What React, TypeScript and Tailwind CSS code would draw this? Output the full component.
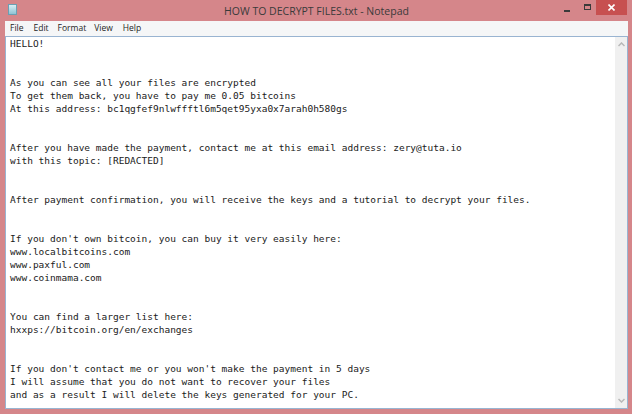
import React from "react";

const lines: string[] = [
  "HELLO!",
  "",
  "",
  "As you can see all your files are encrypted",
  "To get them back, you have to pay me 0.05 bitcoins",
  "At this address: bc1qgfef9nlwffftl6m5qet95yxa0x7arah0h580gs",
  "",
  "",
  "After you have made the payment, contact me at this email address: zery@tuta.io",
  "with this topic: [REDACTED]",
  "",
  "",
  "After payment confirmation, you will receive the keys and a tutorial to decrypt your files.",
  "",
  "",
  "If you don't own bitcoin, you can buy it very easily here:",
  "www.localbitcoins.com",
  "www.paxful.com",
  "www.coinmama.com",
  "",
  "",
  "You can find a larger list here:",
  "hxxps://bitcoin.org/en/exchanges",
  "",
  "",
  "If you don't contact me or you won't make the payment in 5 days",
  "I will assume that you do not want to recover your files",
  "and as a result I will delete the keys generated for your PC.",
];

export default function App() {
  return (
    <div className="w-[632px] h-[414px] bg-[#d5868a] flex flex-col overflow-hidden">
      {/* Title bar */}
      <div className="relative h-[21px] flex items-center shrink-0">
        <div className="absolute left-[8px] top-[4px] w-[9px] h-[11px] bg-gradient-to-b from-[#d8eef5] to-[#8fc3d4] border border-[#6b9fb3]" />
        <div
          className="w-full text-center text-[10.5px] text-[#3a3a3a] leading-none pt-[1px] pl-[1px]"
          style={{ fontFamily: '"Open Sans", "Noto Sans", sans-serif' }}
        >
          HOW TO DECRYPT FILES.txt - Notepad
        </div>
        {/* Controls */}
        <div className="absolute left-[564px] top-[10px] w-[6px] h-[2px] bg-[#3a3a3a]" />
        <div className="absolute left-[584px] top-[4px] w-[7px] h-[6px] border border-[#3a3a3a] border-t-2" />
        <div className="absolute left-[596px] top-0 w-[31px] h-[15px] bg-[#c75050] flex items-center justify-center">
          <svg width="7" height="7" viewBox="0 0 7 7">
            <path d="M0.5 0.5 L6.5 6.5 M6.5 0.5 L0.5 6.5" stroke="#ffffff" strokeWidth="1.6" />
          </svg>
        </div>
      </div>
      {/* Client */}
      <div className="flex-1 flex flex-col ml-[5px] mr-[4px] mb-[5px] min-h-0">
        {/* Menu bar */}
        <div
          className="h-[15px] shrink-0 bg-[#f5f6f7] flex items-center text-[8.5px] text-[#1e1e1e] leading-none"
          style={{ fontFamily: '"Open Sans", "Noto Sans", sans-serif' }}
        >
          <span className="ml-[5px]">File</span>
          <span className="ml-[10px]">Edit</span>
          <span className="ml-[9px]">Format</span>
          <span className="ml-[8px]">View</span>
          <span className="ml-[10px]">Help</span>
        </div>
        {/* Edit area */}
        <div className="flex-1 flex min-h-0 border border-[#99b4d1] bg-white">
          <div
            className="flex-1 pl-[4px] text-[9.5px] leading-[13px] text-[#1a1a1a] whitespace-pre overflow-hidden"
            style={{ fontFamily: '"DejaVu Sans Mono", "Liberation Mono", monospace' }}
          >
            {lines.map((l, i) => (
              <div key={i} className="h-[13px]">
                {l}
              </div>
            ))}
          </div>
          <div className="w-[12px] shrink-0 bg-[#f0f0f0] flex flex-col items-center justify-between py-[5px]">
            <svg width="7" height="5" viewBox="0 0 7 5">
              <path d="M0.5 4 L3.5 1 L6.5 4" stroke="#b8b8b8" strokeWidth="1.5" fill="none" />
            </svg>
            <svg width="7" height="5" viewBox="0 0 7 5">
              <path d="M0.5 1 L3.5 4 L6.5 1" stroke="#b8b8b8" strokeWidth="1.5" fill="none" />
            </svg>
          </div>
        </div>
      </div>
    </div>
  );
}
